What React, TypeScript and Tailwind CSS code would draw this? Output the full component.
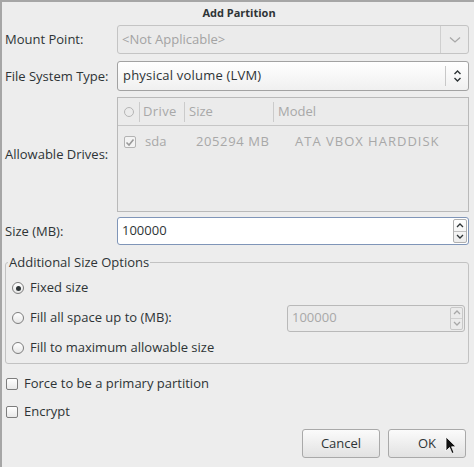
import React from "react";

const ChevDown = ({ c = "#2e3436" }: { c?: string }) => (
  <svg width="12" height="8" viewBox="0 0 12 8"><path d="M1 1.5 L6 6 L11 1.5" fill="none" stroke={c} strokeWidth="1.3" /></svg>
);
const UpDown = ({ c = "#2e3436", w = 9, h = 14 }: { c?: string; w?: number; h?: number }) => (
  <svg width={w} height={h} viewBox="0 0 9 14"><path d="M1.5 5 L4.5 2 L7.5 5 M1.5 9 L4.5 12 L7.5 9" fill="none" stroke={c} strokeWidth="1.4" /></svg>
);
const SmallUp = ({ c }: { c: string }) => (
  <svg width="8" height="5" viewBox="0 0 8 5"><path d="M1 4 L4 1 L7 4" fill="none" stroke={c} strokeWidth="1.3" /></svg>
);
const SmallDown = ({ c }: { c: string }) => (
  <svg width="8" height="5" viewBox="0 0 8 5"><path d="M1 1 L4 4 L7 1" fill="none" stroke={c} strokeWidth="1.3" /></svg>
);

const Radio = ({ on }: { on?: boolean }) => (
  <div className="w-[12px] h-[12px] rounded-full border border-[#7d7d7d] bg-gradient-to-b from-[#ffffff] to-[#e6e6e6] flex items-center justify-center shrink-0">
    {on && <div className="w-[5px] h-[5px] rounded-full bg-[#2e3436]" />}
  </div>
);

const Check = () => (
  <div className="w-[12px] h-[12px] rounded-[2px] border border-[#7d7d7d] bg-gradient-to-b from-[#ffffff] to-[#e8e8e8] shrink-0" />
);

export default function App() {
  return (
    <div
      className="w-[474px] h-[467px] bg-[#ededed] border-t-2 border-l-2 border-[#a6a6a6] text-[#2e3436] text-[13px] relative overflow-hidden"
      style={{ fontFamily: '"Open Sans", "Noto Sans", sans-serif' }}
    >
      {/* Title */}
      <div className="h-[22px] flex items-center justify-center font-bold text-[11px] pl-[2px]">Add Partition</div>

      <div className="pl-[3px] pr-[5px]">
        <div className="grid grid-cols-[112px_352px] items-center">
          {/* Mount point */}
          <div className="leading-none">Mount Point:</div>
          <div className="mt-[1px] h-[29px] rounded-[3px] border border-[#c4c4c4] bg-[#ebebeb] flex items-stretch">
            <div className="flex-1 flex items-center pl-[4px] text-[#a3a3a3]">&lt;Not Applicable&gt;</div>
            <div className="w-[28px] border-l border-[#cfcfcf] flex items-center justify-center">
              <ChevDown c="#a8a8a8" />
            </div>
          </div>

          {/* File system type */}
          <div className="mt-[7px] leading-none">File System Type:</div>
          <div className="mt-[7px] h-[30px] rounded-[3px] border border-[#a2a2a2] bg-gradient-to-b from-[#ffffff] to-[#f0f0f0] flex items-stretch">
            <div className="flex-1 flex items-center pl-[5px] tracking-[0.2px]">physical volume (LVM)</div>
            <div className="my-[4px] border-l border-[#c8c8c8]" />
            <div className="w-[22px] flex items-center justify-center">
              <UpDown />
            </div>
          </div>

          {/* Allowable drives */}
          <div className="mt-[6px] leading-none">Allowable Drives:</div>
          <div className="mt-[6px] h-[115px] border border-[#b9b9b9] bg-[#ebebeb] flex flex-col text-[#a8a8a8]">
            <div className="h-[28px] border-b border-[#c6c6c6] flex items-center">
              <div className="w-[21px] flex justify-center">
                <div className="w-[10px] h-[10px] rounded-full border border-[#b5b5b5]" />
              </div>
              <div className="h-[20px] border-l border-[#cbcbcb]" />
              <div className="w-[44px] pl-[3px] tracking-[0.4px]">Drive</div>
              <div className="h-[20px] border-l border-[#cbcbcb]" />
              <div className="w-[88px] pl-[4px]">Size</div>
              <div className="h-[20px] border-l border-[#cbcbcb]" />
              <div className="pl-[4px]">Model</div>
            </div>
            <div className="h-[32px] flex items-center">
              <div className="w-[22px] flex justify-center pl-[1px]">
                <div className="w-[12px] h-[12px] rounded-[2px] border border-[#b3b3b3] bg-[#f3f3f3] flex items-center justify-center">
                  <svg width="10" height="9" viewBox="0 0 10 9"><path d="M1.5 4.5 L4 7 L8.5 1.5" fill="none" stroke="#9a9a9a" strokeWidth="1.6" /></svg>
                </div>
              </div>
              <div className="w-[50px] pl-[5px]">sda</div>
              <div className="w-[102px] pl-[6px] tracking-[0.6px]">205294 MB</div>
              <div className="pl-[3px] tracking-[1px]">ATA VBOX HARDDISK</div>
            </div>
          </div>

          {/* Size */}
          <div className="mt-[5px] leading-none">Size (MB):</div>
          <div className="mt-[5px] h-[28px] rounded-[3px] border border-[#7f95b8] bg-white flex items-stretch">
            <div className="flex-1 flex items-center pl-[4px]">100000</div>
            <div className="w-[14px] my-[1px] mr-[1px] border border-[#b0b0b0] rounded-[2px] flex flex-col bg-gradient-to-b from-[#ffffff] to-[#ececec]">
              <div className="flex-1 flex items-center justify-center border-b border-[#c0c0c0]"><SmallUp c="#2e3436" /></div>
              <div className="flex-1 flex items-center justify-center"><SmallDown c="#2e3436" /></div>
            </div>
          </div>
        </div>

        {/* Additional size options */}
        <div className="mt-[17px] relative">
          <div className="h-[102px] rounded-[3px] border border-[#c2c2c2] flex flex-col pt-[10px] pl-[6px] pr-[3px]">
            <div className="h-[31px] flex items-center gap-[6px]">
              <Radio on />
              <span>Fixed size</span>
            </div>
            <div className="h-[31px] flex items-center gap-[6px]">
              <Radio />
              <span className="flex-1">Fill all space up to (MB):</span>
              <div className="w-[178px] h-[27px] rounded-[3px] border border-[#b9b9b9] bg-[#ebebeb] flex items-stretch text-[#a8a8a8]">
                <div className="flex-1 flex items-center pl-[4px]">100000</div>
                <div className="w-[13px] my-[1px] mr-[1px] border border-[#c8c8c8] rounded-[2px] flex flex-col">
                  <div className="flex-1 flex items-center justify-center border-b border-[#d0d0d0]"><SmallUp c="#a8a8a8" /></div>
                  <div className="flex-1 flex items-center justify-center"><SmallDown c="#a8a8a8" /></div>
                </div>
              </div>
            </div>
            <div className="h-[31px] flex items-center gap-[6px]">
              <Radio />
              <span>Fill to maximum allowable size</span>
            </div>
          </div>
          <div className="absolute left-[3px] top-[-8px] px-[1px] bg-[#ededed] leading-[16px]">Additional Size Options</div>
        </div>

        {/* Checkboxes */}
        <div className="mt-[12px] pl-[1px] flex flex-col">
          <div className="h-[16px] flex items-center gap-[6px]">
            <Check />
            <span>Force to be a primary partition</span>
          </div>
          <div className="mt-[12px] h-[16px] flex items-center gap-[6px]">
            <Check />
            <span>Encrypt</span>
          </div>
        </div>

        {/* Buttons */}
        <div className="mt-[9px] flex justify-end gap-[8px] pr-[3px]">
          <button className="w-[78px] h-[29px] rounded-[3px] border border-[#a9a9a9] bg-gradient-to-b from-[#fbfbfb] to-[#e2e2e2] text-[13px] text-[#2e3436]">Cancel</button>
          <button className="w-[78px] h-[29px] rounded-[3px] border border-[#a9a9a9] bg-gradient-to-b from-[#fbfbfb] to-[#e2e2e2] text-[13px] text-[#2e3436]">OK</button>
        </div>
      </div>

      {/* mouse cursor */}
      <svg className="absolute left-[443px] top-[434px]" width="12" height="19" viewBox="0 0 12 19">
        <path d="M1 1 L1 15 L4.5 11.5 L7 17.5 L9 16.6 L6.6 10.8 L11 10.8 Z" fill="#111" stroke="#fff" strokeWidth="0.8" />
      </svg>
    </div>
  );
}
